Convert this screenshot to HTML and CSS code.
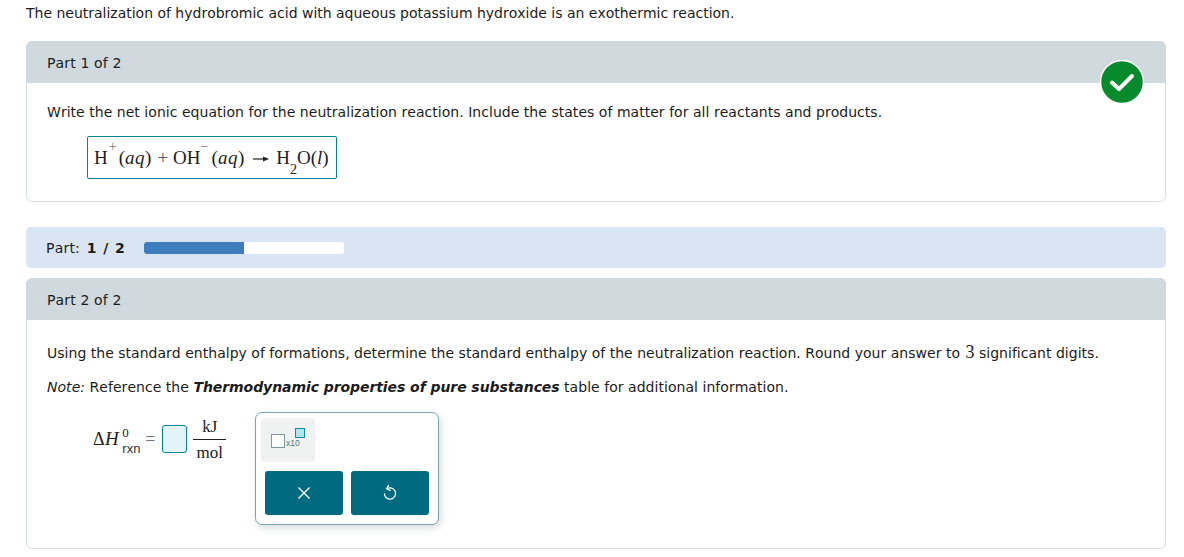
FILE: index.html
```html
<!DOCTYPE html>
<html lang="en">
<head>
<meta charset="utf-8">
<title>Neutralization</title>
<link rel="stylesheet" href="styles.css">
</head>
<body>
<p class="intro">The neutralization of hydrobromic acid with aqueous potassium hydroxide is an exothermic reaction.</p>

<section class="card card-one">
  <header class="card-head">Part 1 of 2</header>
  <div class="card-body body-one">
    <p class="prompt">Write the net ionic equation for the neutralization reaction. Include the states of matter for all reactants and products.</p>
    <div class="answer-box math">
      <span class="el">H</span><sup class="sup">+</sup><span class="paren">(</span><i class="aq">aq</i><span class="paren">)</span><span class="op">+</span><span class="el">OH</span><sup class="sup minus">&minus;</sup><span class="paren">(</span><i class="aq">aq</i><span class="paren">)</span>
      <svg class="arrow" width="16" height="8" viewBox="0 0 16 8"><path d="M0 4H11" stroke="#222" stroke-width="1.2"/><path d="M10 1.5L16 4L10 6.5Z" fill="#222"/></svg>
      <span class="el">H</span><sub class="sub">2</sub><span class="el">O</span><span class="paren">(</span><i class="ell">l</i><span class="paren">)</span>
    </div>
  </div>
  <span class="check">
    <svg width="44" height="44" viewBox="0 0 44 44"><circle cx="22" cy="22" r="21.5" fill="#078a2c" stroke="#fff" stroke-width="1.5"/><path d="M12 22.5L19 29L32 16" fill="none" stroke="#fff" stroke-width="4" stroke-linecap="round" stroke-linejoin="round"/></svg>
  </span>
</section>

<div class="progress">
  <span class="progress-label">Part: <b>1 / 2</b></span>
  <div class="track"><div class="fill"></div></div>
</div>

<section class="card card-two">
  <header class="card-head">Part 2 of 2</header>
  <div class="card-body body-two">
    <p class="prompt prompt-two">Using the standard enthalpy of formations, determine the standard enthalpy of the neutralization reaction. Round your answer to <span class="serif-num">3</span> significant digits.</p>
    <p class="note"><i>Note:</i> Reference the <b><i>Thermodynamic properties of pure substances</i></b> table for additional information.</p>
    <div class="work">
      <div class="equation math">
        <span class="delta">&Delta;<i>H</i></span>
        <span class="scripts"><span class="degree">0</span><span class="rxn">rxn</span></span>
        <span class="equals">=</span>
        <span class="blank"></span>
        <span class="fraction"><span class="num">kJ</span><span class="den">mol</span></span>
      </div>
      <div class="palette">
        <div class="tool">
          <span class="tool-box"></span><span class="tool-x">x10</span><span class="tool-exp"></span>
        </div>
        <div class="actions">
          <button class="action" aria-label="Clear">
            <svg width="14" height="14" viewBox="0 0 14 14"><path d="M1.5 1.5L12.5 12.5M12.5 1.5L1.5 12.5" stroke="#fff" stroke-width="1.4" fill="none"/></svg>
          </button>
          <button class="action" aria-label="Undo">
            <svg width="16" height="18" viewBox="0 0 16 18"><path d="M5 4.8A5.6 5.6 0 1 1 2.4 9.4" fill="none" stroke="#fff" stroke-width="1.3"/><path d="M6.8 1L4.6 4.8L8.6 6.6" fill="none" stroke="#fff" stroke-width="1.3"/></svg>
          </button>
        </div>
      </div>
    </div>
  </div>
</section>
</body>
</html>
```
FILE: styles.css
```css
* { box-sizing: border-box; }
html, body { margin: 0; padding: 0; }
body {
  width: 1184px;
  height: 557px;
  overflow: hidden;
  padding: 0 18px 0 26px;
  background: #fff;
  color: #1c1c1c;
  font-family: "DejaVu Sans", sans-serif;
  font-size: 14px;
  line-height: 20px;
  font-kerning: none;
}
p { margin: 0; }
.intro { padding-top: 3px; height: 41px; letter-spacing: -0.01px; }
.prompt { letter-spacing: 0.033px; }
.prompt-two { letter-spacing: 0.02px; }
.card {
  position: relative;
  border: 1px solid #d5dde0;
  border-radius: 6px;
}
.card-one { height: 161px; }
.card-two { height: 271px; margin-top: 10px; }
.card-head {
  height: 42px;
  margin: -1px -1px 0;
  padding: 12px 21px 10px;
  background: #cfd9de;
  border-radius: 6px 6px 0 0;
  letter-spacing: 0.15px;
}
.card-body { padding: 0 20px; }
.body-one { padding-top: 19px; }
.math {
  font-family: "Liberation Serif", serif;
  font-size: 18px;
  color: #222;
}
.answer-box {
  display: flex;
  align-items: center;
  width: 250px;
  height: 43px;
  margin: 14px 0 0 40px;
  padding: 0 0 0 6px;
  border: 1px solid #00829b;
  border-radius: 2px;
  white-space: nowrap;
  line-height: 20px;
}
.el { font-size: 19px; }
.sup {
  font-size: 14px;
  line-height: 10px;
  align-self: flex-start;
  margin: 5px 0 0 1px;
  color: #777;
  width: 10px;
}
.minus { width: 11px; margin-left: 0; }
.paren { font-size: 19px; }
.aq { font-size: 19px; letter-spacing: 0.5px; }
.ell { font-size: 19px; }
.op { margin: 0 5px 0 6px; color: #555; font-size: 19px; }
.arrow { margin: 2px 7px 0 9px; }
.sub {
  font-size: 14px;
  line-height: 10px;
  align-self: flex-end;
  margin-bottom: 3px;
}
.check {
  position: absolute;
  top: 18px;
  right: 21px;
  width: 44px;
  height: 44px;
}
.check svg { display: block; }
.progress {
  display: flex;
  align-items: center;
  height: 41px;
  margin-top: 25px;
  padding-left: 20px;
  background: #d9e5f3;
  border-radius: 5px;
}
.progress-label { width: 98px; letter-spacing: 0.2px; white-space: nowrap; }
.progress-label b { margin-left: 2px; word-spacing: 1.5px; }
.track {
  width: 200px;
  height: 12px;
  background: #fff;
  border-radius: 3px;
  overflow: hidden;
}
.fill { width: 100px; height: 12px; background: #3d7cbd; }
.body-two { padding-top: 22px; }
.serif-num { font-family: "Liberation Serif", serif; font-size: 18px; margin-left: 1px; }
.note { margin-top: 14px; letter-spacing: 0.04px; }
.note b i { letter-spacing: -0.07px; }
.work {
  display: flex;
  align-items: flex-start;
  margin-top: 15px;
}
.equation {
  display: flex;
  align-items: center;
  height: 50px;
  width: 208px;
  padding: 3px 0 0 46px;
  line-height: 20px;
}
.delta { font-size: 18px; letter-spacing: 0.5px; margin-top: 1px; }
.delta i { font-size: 19px; }
.scripts {
  display: flex;
  flex-direction: column;
  width: 26px;
  padding-left: 3px;
  margin-top: 3px;
}
.degree { font-size: 13px; line-height: 13px; }
.rxn { font-family: "Liberation Sans", sans-serif; font-size: 13px; line-height: 13px; margin-top: 3px; color: #333; }
.equals { width: 17px; color: #777; }
.blank {
  width: 25px;
  height: 28px;
  background: #e3f3f8;
  border: 1px solid #00829b;
  border-radius: 3px;
}
.fraction {
  display: flex;
  flex-direction: column;
  align-items: center;
  width: 33px;
  margin: 3px 0 0 6px;
}
.num { width: 100%; text-align: center; font-size: 17px; line-height: 25px; border-bottom: 1px solid #222; }
.den { font-size: 17px; line-height: 26px; }
.palette {
  width: 184px;
  height: 113px;
  padding: 5px 9px 0 5px;
  background: #fff;
  border: 1px solid #7ba5ae;
  border-radius: 7px;
  box-shadow: 2px 3px 7px rgba(90, 120, 130, 0.25);
}
.tool {
  position: relative;
  width: 54px;
  height: 44px;
  background: #f0f2f2;
  border-radius: 4px;
}
.tool-box {
  position: absolute;
  left: 10px;
  top: 16px;
  width: 14px;
  height: 14px;
  background: #fff;
  border: 1.5px solid #7b9aa5;
}
.tool-x {
  position: absolute;
  left: 25px;
  top: 20px;
  font-family: "Liberation Sans", sans-serif;
  font-size: 8.5px;
  line-height: 10px;
  color: #4a7a88;
}
.tool-exp {
  position: absolute;
  left: 34px;
  top: 10px;
  width: 10px;
  height: 10px;
  background: #b5e3ee;
  border: 1.5px solid #0e8fa8;
}
.actions {
  display: flex;
  gap: 8px;
  margin: 9px 0 0 4px;
}
.action {
  display: flex;
  align-items: center;
  justify-content: center;
  width: 78px;
  height: 44px;
  padding: 0;
  background: #006a80;
  border: 0;
  border-radius: 3px;
}
```
